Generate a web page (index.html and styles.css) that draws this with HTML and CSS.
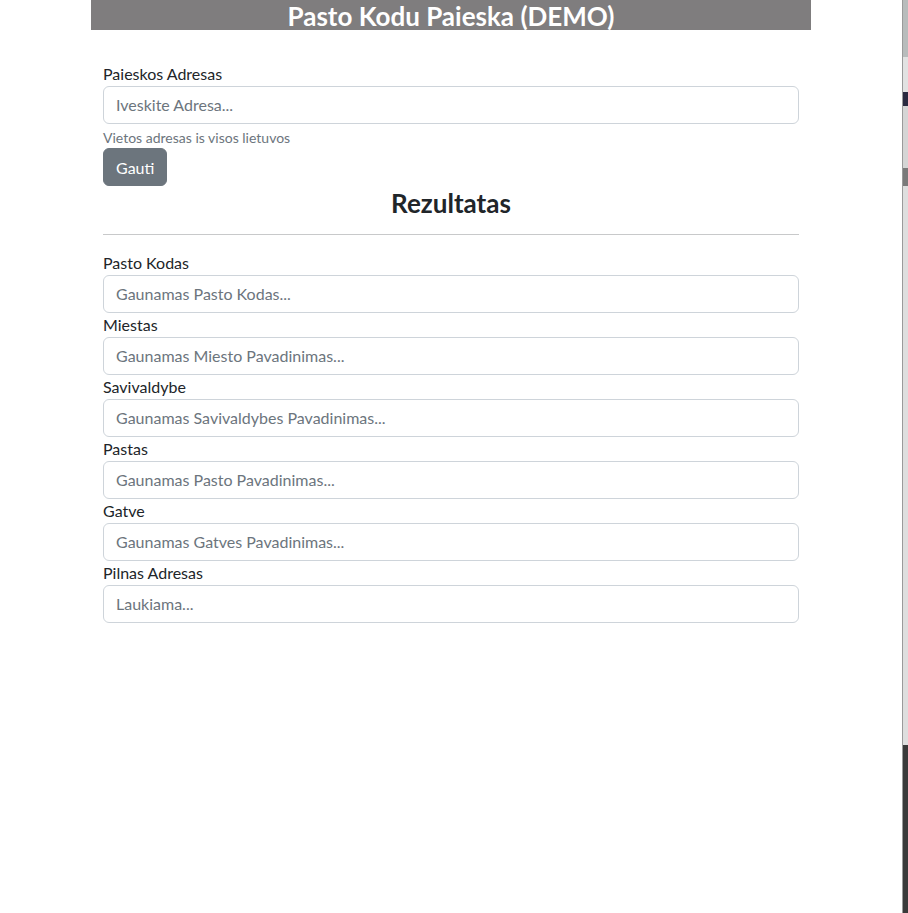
FILE: index.html
```html
<!DOCTYPE html>
<html lang="lt">
<head>
<meta charset="utf-8">
<title>Pasto Kodu Paieska (DEMO)</title>
<link rel="stylesheet" href="styles.css">
</head>
<body>
<div class="page">
  <div class="container">
    <div class="banner">Pasto Kodu Paieska (DEMO)</div>
    <form class="search">
      <label class="label" for="addr">Paieskos Adresas</label>
      <input class="control" id="addr" type="text" placeholder="Iveskite Adresa...">
      <div class="help">Vietos adresas is visos lietuvos</div>
      <button class="btn" type="button">Gauti</button>
    </form>
    <h3 class="title">Rezultatas</h3>
    <hr class="rule">
    <div class="results">
      <label class="label">Pasto Kodas</label>
      <input class="control" type="text" placeholder="Gaunamas Pasto Kodas...">
      <label class="label">Miestas</label>
      <input class="control" type="text" placeholder="Gaunamas Miesto Pavadinimas...">
      <label class="label">Savivaldybe</label>
      <input class="control" type="text" placeholder="Gaunamas Savivaldybes Pavadinimas...">
      <label class="label">Pastas</label>
      <input class="control" type="text" placeholder="Gaunamas Pasto Pavadinimas...">
      <label class="label">Gatve</label>
      <input class="control" type="text" placeholder="Gaunamas Gatves Pavadinimas...">
      <label class="label">Pilnas Adresas</label>
      <input class="control" type="text" placeholder="Laukiama...">
    </div>
  </div>
</div>
<div class="edge"></div>
</body>
</html>
```
FILE: styles.css
```css
html, body {
  margin: 0;
  padding: 0;
  height: 100%;
}
body {
  display: flex;
  background: #fff;
  font-family: Lato, "Noto Sans", sans-serif;
  font-size: 16px;
  line-height: 1.5;
  color: #212529;
}
.page {
  flex: 1;
}
.container {
  width: 720px;
  margin: 0 auto;
  box-sizing: border-box;
}
.banner {
  height: 30px;
  background: #7f7d7e;
  color: #fff;
  text-align: center;
  font-size: 26px;
  font-weight: 700;
  line-height: 32px;
  white-space: nowrap;
}
.search, .results, .title, .rule {
  margin-left: 12px;
  margin-right: 12px;
}
.search {
  display: flex;
  flex-direction: column;
  align-items: flex-start;
  padding-top: 32px;
}
.label {
  display: block;
  line-height: 24px;
}
.control {
  display: block;
  width: 100%;
  box-sizing: border-box;
  height: 38px;
  padding: 5px 12px 7px;
  font-family: inherit;
  font-size: 16px;
  color: #212529;
  background: #fff;
  border: 1px solid #ced4da;
  border-radius: 6px;
  outline: none;
}
.control::placeholder {
  color: #6c757d;
  opacity: 1;
}
.help {
  margin-top: 3px;
  font-size: 14px;
  line-height: 21px;
  color: #6c757d;
}
.btn {
  height: 38px;
  padding: 6px 12px;
  font-family: inherit;
  font-size: 16px;
  color: #fff;
  background: #6c757d;
  border: 1px solid #6c757d;
  border-radius: 6px;
}
.title {
  margin-top: 0;
  margin-bottom: 0;
  text-align: center;
  font-size: 26px;
  font-weight: 700;
  line-height: 34px;
}
.rule {
  margin-top: 14px;
  margin-bottom: 16px;
  border: 0;
  border-top: 1px solid #c8c9ca;
}
.results {
  display: flex;
  flex-direction: column;
}
.edge {
  width: 5px;
  border-left: 1px solid #9a9a9a;
  background: linear-gradient(#b8bcbc 0 57px, #e2e2e2 57px 92px, #2a2a40 92px 106px, #d5d5d5 106px 168px, #7a7a7a 168px 186px, #dedede 186px 745px, #3a3a3a 745px);
}
```
